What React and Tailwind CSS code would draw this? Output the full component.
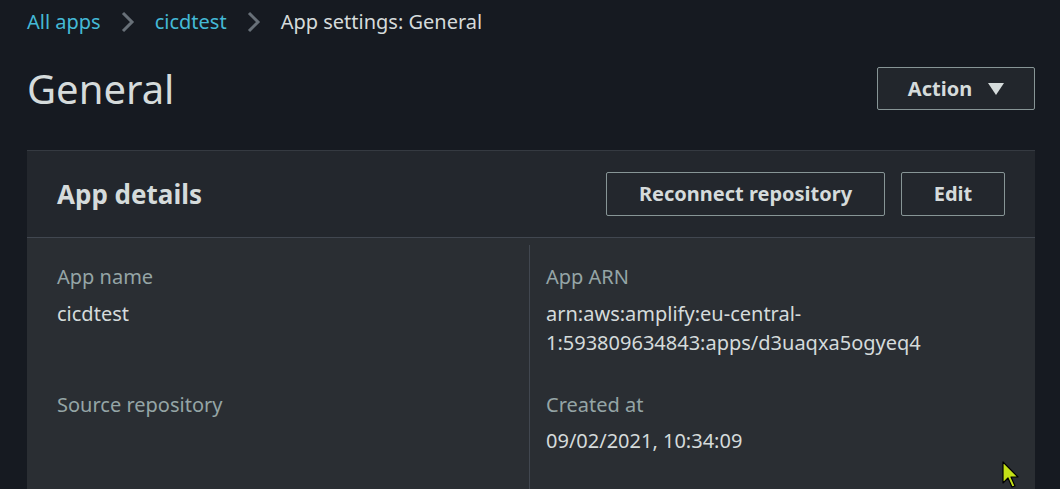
export default function App() {
  const font = { fontFamily: "'Noto Sans', 'Open Sans', sans-serif" };
  const Chevron = () => (
    <svg width="14" height="22" viewBox="0 0 14 22" className="mx-[20px]">
      <path d="M2 2 L11 11 L2 20" fill="none" stroke="#687078" strokeWidth="3" />
    </svg>
  );
  return (
    <div className="relative h-[489px] w-[1060px] overflow-hidden bg-[#161a21] text-[#d5dbdb]" style={font}>
      <div className="pl-[27px] pr-[25px]">
        <nav className="flex h-[44px] items-center text-[20px] leading-[28px]">
          <span className="text-[#44b9d6]">All apps</span>
          <Chevron />
          <span className="text-[#44b9d6]">cicdtest</span>
          <Chevron />
          <span>App settings: General</span>
        </nav>
        <div className="mt-[23px] flex h-[43px] items-center justify-between">
          <h1 className="text-[40px] leading-none">General</h1>
          <button className="flex h-[43px] w-[158px] items-center justify-center gap-[16px] rounded-[2px] border border-[#879596] bg-[#22262c] text-[20px] font-bold leading-none">
            Action
            <svg width="16" height="12" viewBox="0 0 16 12">
              <path d="M0 0 H16 L8 12 Z" fill="#d5dbdb" />
            </svg>
          </button>
        </div>
        <div className="mt-[40px] border-t border-[#353a41] bg-[#2a2e33]">
          <div className="flex h-[87px] items-center justify-between border-b border-[#414750] bg-[#23272d] pl-[30px] pr-[30px]">
            <h2 className="text-[26px] font-bold leading-none">App details</h2>
            <div className="flex gap-[16px]">
              <button className="h-[44px] w-[279px] rounded-[2px] border border-[#879596] bg-[#23272d] text-[20px] font-bold leading-none">
                Reconnect repository
              </button>
              <button className="h-[44px] w-[104px] rounded-[2px] border border-[#879596] bg-[#23272d] text-[20px] font-bold leading-none">
                Edit
              </button>
            </div>
          </div>
          <div className="grid h-[260px] grid-cols-[502px_1fr] pt-[7px]">
            <div className="flex flex-col gap-[33px] pl-[30px] pr-[16px] pt-[17px] text-[20px] leading-[29px]">
              <div>
                <div className="text-[#95a5a6]">App name</div>
                <div className="mt-[8px]">cicdtest</div>
              </div>
              <div className="pt-[29px]">
                <div className="text-[#95a5a6]">Source repository</div>
              </div>
            </div>
            <div className="flex flex-col gap-[33px] border-l border-[#414750] pl-[16px] pt-[17px] text-[20px] leading-[29px]">
              <div>
                <div className="text-[#95a5a6]">App ARN</div>
                <div className="mt-[8px]">
                  arn:aws:amplify:eu-central-
                  <br />
                  1:593809634843:apps/d3uaqxa5ogyeq4
                </div>
              </div>
              <div>
                <div className="text-[#95a5a6]">Created at</div>
                <div className="mt-[7px]">09/02/2021, 10:34:09</div>
              </div>
            </div>
          </div>
        </div>
      </div>
      <svg className="absolute left-[1002px] top-[461px]" width="20" height="28" viewBox="0 0 20 28">
        <path d="M1 1 L1 22 L6 17 L10 26 L13 25 L9 16 L16 16 Z" fill="#c4e017" stroke="#000" strokeWidth="1.2" strokeLinejoin="round" />
      </svg>
    </div>
  );
}
